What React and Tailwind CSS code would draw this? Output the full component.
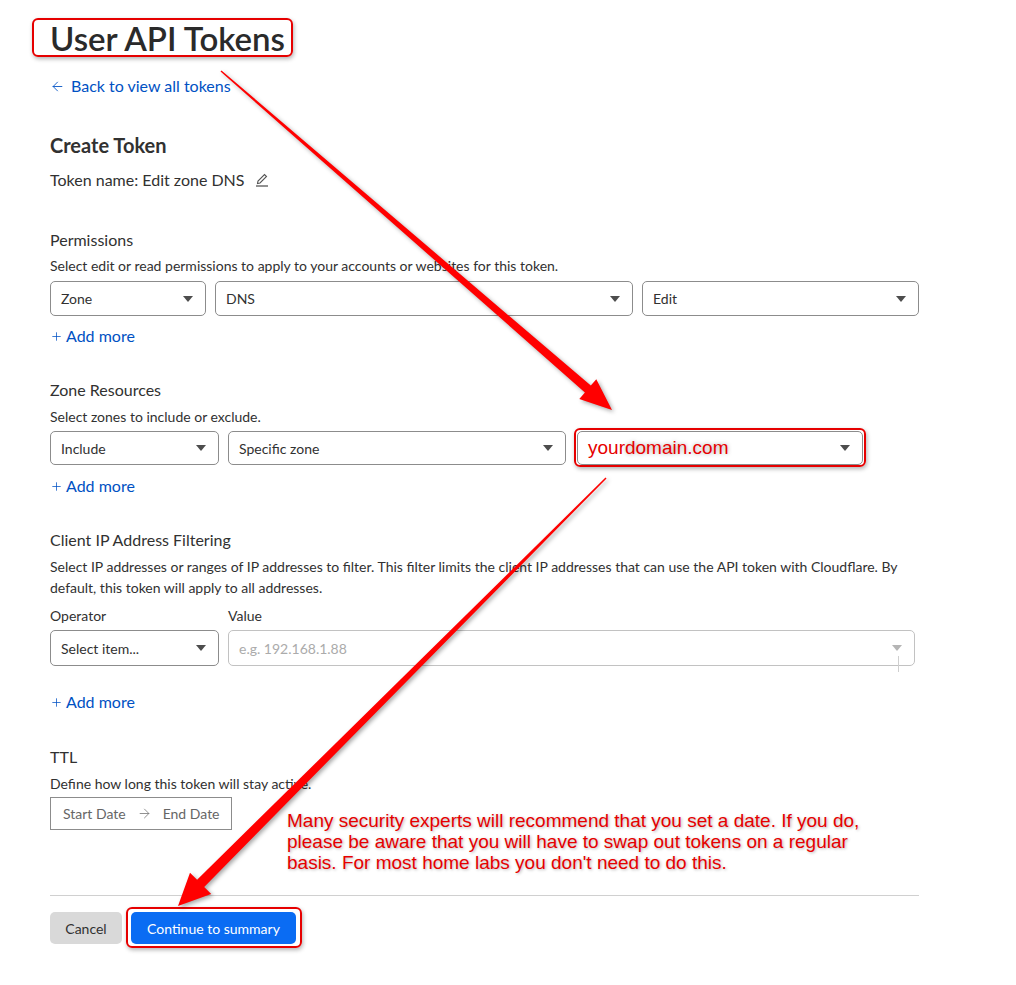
import { ArrowLeft, ArrowRight, Plus } from 'lucide-react';

const FONT = { fontFamily: 'Lato, "Noto Sans", sans-serif' };
const ARIAL = { fontFamily: '"Liberation Sans", Arial, sans-serif' };

// tapered annotation arrow: thin tail, wide shaft, triangular head
function arrowPoints(sx, sy, tx, ty, w0, w1, headLen, headHalf) {
  const dx = tx - sx;
  const dy = ty - sy;
  const len = Math.hypot(dx, dy);
  const ux = dx / len;
  const uy = dy / len;
  const nx = -uy;
  const ny = ux;
  const bx = tx - ux * headLen;
  const by = ty - uy * headLen;
  const pts = [
    [sx + nx * w0 / 2, sy + ny * w0 / 2],
    [bx + nx * w1 / 2, by + ny * w1 / 2],
    [bx + nx * headHalf, by + ny * headHalf],
    [tx, ty],
    [bx - nx * headHalf, by - ny * headHalf],
    [bx - nx * w1 / 2, by - ny * w1 / 2],
    [sx - nx * w0 / 2, sy - ny * w0 / 2],
  ];
  return pts.map((p) => p.map((v) => v.toFixed(1)).join(',')).join(' ');
}

function Caret({ light }) {
  return (
    <svg width="10" height="6" viewBox="0 0 10 6" className="shrink-0">
      <path d="M0 0 L10 0 L5 6 Z" fill={light ? '#b5b5b5' : '#4d4d4d'} />
    </svg>
  );
}

function Select({ width, children, light, placeholder, red }) {
  return (
    <div
      className={`flex h-full items-center justify-between rounded-[5px] border bg-white pl-[10px] pr-[12px] ${
        light ? 'border-[#c2c2c2]' : 'border-[#8c8c8c]'
      }`}
      style={{ width }}
    >
      {red ? (
        <span className="text-[19px] leading-[20px] text-[#e60000]" style={ARIAL}>
          your<span className="[text-shadow:0_0_4px_rgba(0,0,0,0.35)]">domain.com</span>
        </span>
      ) : (
        <span className={`text-[14px] ${placeholder ? 'text-[#ababab]' : 'text-[#313131]'}`}>{children}</span>
      )}
      <Caret light={light} />
    </div>
  );
}

function AddMore({ className }) {
  return (
    <div className={`flex h-[20px] items-center gap-[3px] text-[16px] leading-[20px] text-[#0051c3] ${className}`}>
      <Plus size={13} strokeWidth={1.4} />
      <span>Add more</span>
    </div>
  );
}

export default function App() {
  return (
    <div className="relative h-[985px] w-[1016px] overflow-hidden bg-white text-[#313131]" style={FONT}>
      <div className="w-[920px] pl-[50px]">
        <h1 className="mt-[18px] text-[33px] font-semibold leading-[40px] text-[#2a2a2a]">User API Tokens</h1>

        <div className="mt-[18px] flex h-[20px] items-center gap-[6px] text-[16px] leading-[20px] text-[#0051c3]">
          <ArrowLeft size={15} strokeWidth={1.4} />
          <span>Back to view all tokens</span>
        </div>

        <h2 className="mt-[37px] text-[20px] font-bold leading-[24px]">Create Token</h2>
        <div className="mt-[13px] flex h-[20px] items-center gap-[10px] text-[16px] leading-[20px]">
          <span>Token name: Edit zone DNS</span>
          <svg width="14" height="14" viewBox="0 0 14 14" fill="none" stroke="#555" strokeWidth="1.1">
            <path d="M2.5 10.5 L3 8 L9.5 1.5 L11.5 3.5 L5 10 Z" />
            <path d="M1 13 H13" strokeWidth="1.3" />
          </svg>
        </div>

        <div className="mt-[40px] text-[16px] leading-[20px]">Permissions</div>
        <div className="mt-[7px] text-[14px] leading-[18px]">
          Select edit or read permissions to apply to your accounts or websites for this token.
        </div>
        <div className="mt-[6px] flex h-[35px] gap-[9px]">
          <Select width={156}>Zone</Select>
          <Select width={418}>DNS</Select>
          <Select width={277}>Edit</Select>
        </div>
        <AddMore className="mt-[10px]" />

        <div className="mt-[34px] text-[16px] leading-[20px]">Zone Resources</div>
        <div className="mt-[8px] text-[14px] leading-[18px]">Select zones to include or exclude.</div>
        <div className="mt-[5px] flex h-[34px]">
          <Select width={169}>Include</Select>
          <div className="w-[9px]" />
          <Select width={338}>Specific zone</Select>
          <div className="w-[11px]" />
          <Select width={286} red />
        </div>
        <AddMore className="mt-[11px]" />

        <div className="mt-[34px] text-[16px] leading-[20px]">Client IP Address Filtering</div>
        <div className="mt-[6px] text-[14px] leading-[21px]">
          Select IP addresses or ranges of IP addresses to filter. This filter limits the client IP addresses that can use
          the API token with Cloudflare. By default, this token will apply to all addresses.
        </div>
        <div className="mt-[8px] flex gap-[9px] text-[14px] leading-[20px]">
          <div className="w-[169px]">Operator</div>
          <div>Value</div>
        </div>
        <div className="mt-[4px] flex h-[36px] gap-[9px]">
          <Select width={169}>Select item...</Select>
          <div className="relative h-full">
            <Select width={687} light placeholder>
              e.g. 192.168.1.88
            </Select>
            <div className="absolute right-[16px] top-[26px] h-[16px] w-px bg-[#cfcfcf]" />
          </div>
        </div>
        <AddMore className="mt-[26px]" />

        <div className="mt-[35px] text-[16px] leading-[20px]">TTL</div>
        <div className="mt-[8px] text-[14px] leading-[18px]">Define how long this token will stay active.</div>
        <div className="mt-[4px] flex h-[33px] w-[182px] items-center gap-[11px] border border-[#8c8c8c] pl-[12px] text-[14px] text-[#666]">
          <span>Start Date</span>
          <ArrowRight size={15} strokeWidth={1.3} className="text-[#777]" />
          <span>End Date</span>
        </div>

        <div className="mt-[65px] h-px w-[869px] bg-[#d0d0d0]" />

        <div className="mt-[16px] flex h-[32px] gap-[9px] text-[14px]">
          <button className="w-[72px] rounded-[5px] bg-[#d9d9d9] text-[#313131]">Cancel</button>
          <button className="w-[165px] rounded-[5px] bg-[#0a6cf3] text-white">Continue to summary</button>
        </div>
      </div>

      {/* annotations drawn over the page */}
      <div className="pointer-events-none absolute left-[32px] top-[18px] h-[39px] w-[261px] rounded-[6px] border-2 border-[#e60000] shadow-[1px_2px_4px_rgba(0,0,0,0.3)]" />
      <div className="pointer-events-none absolute left-[574px] top-[428px] h-[39px] w-[292px] rounded-[6px] border-2 border-[#e60000] shadow-[1px_2px_4px_rgba(0,0,0,0.3)]" />
      <div className="pointer-events-none absolute left-[126px] top-[907px] h-[41px] w-[176px] rounded-[6px] border-2 border-[#e60000] shadow-[1px_2px_4px_rgba(0,0,0,0.3)]" />

      <svg
        className="pointer-events-none absolute left-0 top-0 drop-shadow-[2px_2px_2px_rgba(0,0,0,0.35)]"
        width="1016"
        height="985"
      >
        <polygon points={arrowPoints(221, 71, 612, 410, 1.5, 9, 32, 13)} fill="#ff0000" />
        <polygon points={arrowPoints(606, 478, 178, 906, 1.5, 10, 32, 15)} fill="#ff0000" />
      </svg>

      <div
        className="absolute left-[287px] top-[810px] w-[640px] text-[19px] leading-[21px] text-[#e60000] [text-shadow:1px_1px_3px_rgba(0,0,0,0.3)]"
        style={ARIAL}
      >
        Many security experts will recommend that you set a date. If you do,
        <br />
        please be aware that you will have to swap out tokens on a regular
        <br />
        basis. For most home labs you don't need to do this.
      </div>
    </div>
  );
}
